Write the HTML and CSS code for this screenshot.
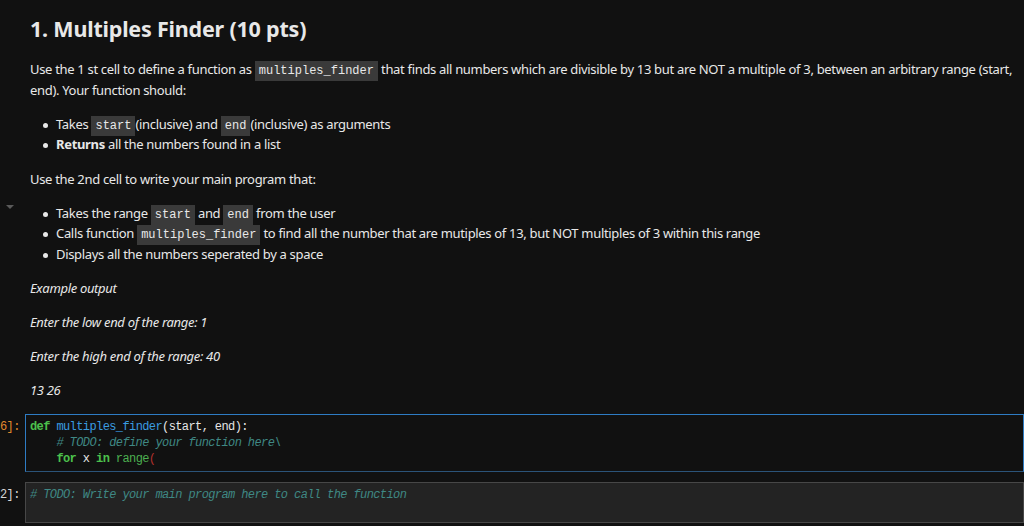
FILE: index.html
```html
<!DOCTYPE html>
<html lang="en">
<head>
    <meta charset="UTF-8">
    <meta name="viewport" content="width=device-width, initial-scale=1.0">
    <title>Multiples Finder</title>
    <link rel="stylesheet" href="styles.css">
</head>
<body>
    <div class="notebook">
        <div class="cell markdown">
            <div class="gutter">
                <span class="collapse"></span>
            </div>
            <div class="md-content">
                <h1>1. Multiples Finder (10 pts)</h1>
                <p>Use the 1 st cell to define a function as <code>multiples_finder</code> that finds all numbers which are divisible by 13 but are NOT a multiple of 3, between an arbitrary range (start, end). Your function should:</p>
                <ul>
                    <li>Takes <code>start</code>(inclusive) and <code>end</code>(inclusive) as arguments</li>
                    <li><b>Returns</b> all the numbers found in a list</li>
                </ul>
                <p>Use the 2nd cell to write your main program that:</p>
                <ul>
                    <li>Takes the range <code>start</code> and <code>end</code> from the user</li>
                    <li>Calls function <code>multiples_finder</code> to find all the number that are mutiples of 13, but NOT multiples of 3 within this range</li>
                    <li>Displays all the numbers seperated by a space</li>
                </ul>
                <p><i>Example output</i></p>
                <p><i>Enter the low end of the range: 1</i></p>
                <p><i>Enter the high end of the range: 40</i></p>
                <p><i>13 26</i></p>
            </div>
        </div>

        <div class="cell code active">
            <div class="prompt run">6]:</div>
            <div class="editor">
<pre><span class="kw">def</span> <span class="fn">multiples_finder</span>(start, end):
    <span class="cm"># TODO: define your function here\</span>
    <span class="kw">for</span> x <span class="kw">in</span> <span class="bi">range</span><span class="err">(</span></pre>
            </div>
        </div>

        <div class="cell code">
            <div class="prompt">2]:</div>
            <div class="editor">
<pre><span class="cm"># TODO: Write your main program here to call the function</span></pre>
            </div>
        </div>
    </div>
</body>
</html>
```

FILE: styles.css
```css
body {
    margin: 0;
    padding: 0;
    background-color: #111111;
    color: #e8e8e8;
    font-family: "Noto Sans", "Open Sans", sans-serif;
    font-size: 13px;
}

.notebook {
    display: flex;
    flex-direction: column;
}

.cell {
    display: flex;
}

/* markdown cell */

.markdown .gutter {
    width: 25px;
    flex-shrink: 0;
    display: flex;
    align-items: center;
    justify-content: center;
}

.collapse {
    width: 0;
    height: 0;
    border-left: 4px solid transparent;
    border-right: 4px solid transparent;
    border-top: 4px solid #5a5a5a;
    margin-left: -5px;
}

.md-content {
    padding: 14px 0 0 5px;
    line-height: 20.5px;
    letter-spacing: -0.32px;
}

.md-content h1 {
    font-size: 21.5px;
    font-weight: bold;
    margin: 0 0 15px 0;
    line-height: 30px;
    letter-spacing: -0.2px;
}

.md-content p {
    margin: 0 0 13.5px 0;
}

.md-content ul {
    margin: 0 0 14px 0;
    padding-left: 26px;
    list-style: none;
}

.md-content li::before {
    content: "";
    display: inline-block;
    width: 5px;
    height: 5px;
    border-radius: 50%;
    background-color: #e8e8e8;
    margin-left: -13px;
    margin-right: 8px;
    vertical-align: middle;
}

.md-content code {
    font-family: "Liberation Mono", monospace;
    font-size: 12px;
    line-height: 1;
    letter-spacing: 0;
    background-color: #3a3a3a;
    padding: 3px 4px;
}

/* code cells */

.code {
    margin-bottom: 10px;
}

.prompt {
    width: 25px;
    flex-shrink: 0;
    font-family: "Liberation Mono", monospace;
    font-size: 12px;
    letter-spacing: -0.6px;
    color: #d6d6d6;
    padding-top: 5px;
    line-height: 16px;
}

.prompt.run {
    color: #e0892c;
}

.editor {
    flex: 1;
    box-sizing: border-box;
    min-height: 41px;
    border: 1px solid #474747;
    background-color: #232323;
}

.active .editor {
    background-color: #111111;
    border-color: #2e7cc4;
    border-bottom-color: #2b5378;
}

.editor pre {
    margin: 0;
    padding: 4px 4px;
    font-family: "Liberation Mono", monospace;
    font-size: 12px;
    letter-spacing: -0.6px;
    line-height: 16px;
    color: #e6e6e6;
}

.kw {
    color: #4cc14c;
    font-weight: bold;
}

.fn {
    color: #3a9ce0;
}

.bi {
    color: #4caf50;
}

.cm {
    color: #3f8884;
    font-style: italic;
}

.err {
    color: #b0302c;
}
```
